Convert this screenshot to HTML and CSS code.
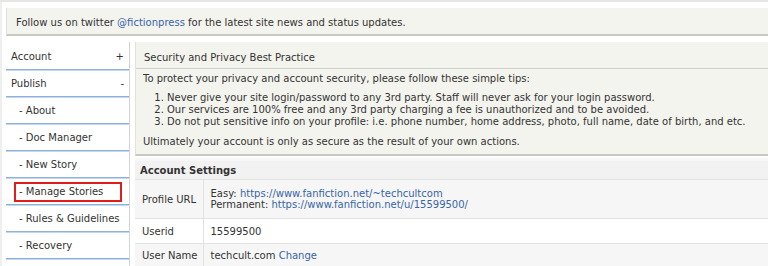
FILE: index.html
```html
<!DOCTYPE html>
<html>
<head>
<meta charset="utf-8">
<link rel="stylesheet" href="styles.css">
</head>
<body>
<div class="topline"></div>
<div class="page">
  <div class="notice">Follow us on twitter <a href="#">@fictionpress</a> for the latest site news and status updates.</div>
  <div class="layout">
    <nav class="side">
      <div class="item"><span>Account</span><span>+</span></div>
      <div class="item"><span>Publish</span><span>-</span></div>
      <div class="item sub">- About</div>
      <div class="item sub">- Doc Manager</div>
      <div class="item sub">- New Story</div>
      <div class="item sub"><span class="hl">- Manage Stories</span></div>
      <div class="item sub">- Rules &amp; Guidelines</div>
      <div class="item sub">- Recovery</div>
    </nav>
    <main class="main">
      <section class="sec">
        <div class="sec-head">Security and Privacy Best Practice</div>
        <div class="sec-body">
          <p>To protect your privacy and account security, please follow these simple tips:</p>
          <ol>
            <li>Never give your site login/password to any 3rd party. Staff will never ask for your login password.</li>
            <li>Our services are 100% free and any 3rd party charging a fee is unauthorized and to be avoided.</li>
            <li>Do not put sensitive info on your profile: i.e. phone number, home address, photo, full name, date of birth, and etc.</li>
          </ol>
          <p>Ultimately your account is only as secure as the result of your own actions.</p>
        </div>
      </section>
      <table class="acct">
        <colgroup><col class="kc"><col></colgroup>
        <tr class="th"><td colspan="2">Account Settings</td></tr>
        <tr class="odd r1"><td class="k">Profile URL</td><td>Easy: <a href="#">https://www.fanfiction.net/~techcultcom</a><br>Permanent: <a href="#">https://www.fanfiction.net/u/15599500/</a></td></tr>
        <tr class="even"><td class="k">Userid</td><td>15599500</td></tr>
        <tr class="odd"><td class="k">User Name</td><td>techcult.com <a href="#">Change</a></td></tr>
      </table>
    </main>
  </div>
</div>
</body>
</html>
```
FILE: styles.css
```css
html, body { margin: 0; padding: 0; background: #fff; overflow: hidden; }
body {
  font-family: "DejaVu Sans", Verdana, sans-serif;
  font-size: 10px;
  color: #333;
  width: 780px;
}
a { color: #3765a8; text-decoration: none; }
.topline { height: 2px; background: #e6e6e6; }
.page { border-left: 2px solid #efefef; padding: 6px 0 0 4px; }
.notice {
  background: #f4f4ee;
  border-left: 1px solid #e2e2da;
  border-bottom: 2px solid #c9c9c4;
  height: 23px;
  line-height: 23px;
  padding: 3px 0 0 9px;
}
.layout { display: flex; margin-top: 6px; }
.side {
  width: 123px;
  border-right: 1px solid #d3d3d3;
  flex: none;
  padding-top: 2px;
}
.item {
  display: flex;
  justify-content: space-between;
  align-items: center;
  height: 25px;
  padding: 0 5px 0 5px;
  border-bottom: 1px solid #8db0dc;
  box-shadow: 0 1px 0 #c5d7ee;
  margin-bottom: 1px;
}
.item.sub { padding-left: 13px; }
.hl {
  display: inline-block;
  outline: 2px solid #e11c1c;
  line-height: 12px;
  padding: 2px 17px 2px 3px;
  margin-left: -3px;
}
.main { flex: 1; margin-left: 5px; }
.sec {
  background: #f4f4ee;
  border-left: 1px solid #e2e2da;
  border-bottom: 2px solid #c9c9c4;
}
.sec-head {
  height: 21px;
  line-height: 21px;
  padding: 5px 0 0 8px;
  border-bottom: 1px solid #cfcfc9;
}
.sec-body { padding: 1px 0 3px 7px; }
.sec-body p { margin: 0; line-height: 18px; }
.sec-body ol { margin: 4px 0 5px 0; padding-left: 24px; }
.sec-body li { line-height: 12px; }
.acct {
  border-collapse: collapse;
  width: 100%;
  margin-top: 2px;
  table-layout: fixed;
}
.acct .kc { width: 68px; }
.acct td { padding: 0 7px; border-top: 1px solid #e2e2e2; vertical-align: middle; white-space: nowrap; }
.acct .th td { background: #f2f2f2; font-weight: bold; height: 18px; padding-left: 5px; border-top: 3px solid #f7f7f7; }
.acct .odd td { background: #f6f6f6; }
.acct .even td { background: #fff; }
.acct td.k { padding: 0 4px 0 7px; border-right: 1px solid #e2e2e2; }
.acct tr.even td { height: 24px; }
.acct tr.odd td { height: 23px; }
.acct tr.r1 td { height: 38px; }
```
